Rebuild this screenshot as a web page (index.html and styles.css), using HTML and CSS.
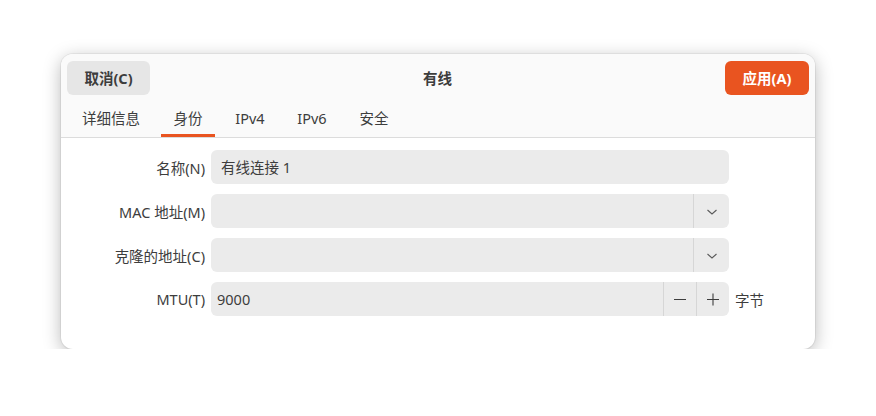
FILE: index.html
```html
<!DOCTYPE html>
<html lang="zh-CN">
<head>
<meta charset="utf-8">
<link rel="stylesheet" href="styles.css">
</head>
<body>
<div class="window">
  <div class="header">
    <div class="headerbar">
      <button class="btn btn-cancel">取消(C)</button>
      <div class="title">有线</div>
      <button class="btn btn-apply">应用(A)</button>
    </div>
    <div class="tabs">
      <div class="tab tab-wide">详细信息</div>
      <div class="tab tab-active">身份</div>
      <div class="tab">IPv4</div>
      <div class="tab">IPv6</div>
      <div class="tab">安全</div>
    </div>
  </div>
  <div class="content">
    <div class="label">名称(N)</div>
    <div class="entry"><span class="entry-text">有线连接 1</span></div>
    <div></div>

    <div class="label">MAC 地址(M)</div>
    <div class="entry combo"><span class="entry-text"></span><span class="combo-btn"><svg width="12" height="8" viewBox="0 0 12 8"><path d="M1.5 2 L6 6 L10.5 2" fill="none" stroke="#5a5a5a" stroke-width="1.1"/></svg></span></div>
    <div></div>

    <div class="label">克隆的地址(C)</div>
    <div class="entry combo"><span class="entry-text"></span><span class="combo-btn"><svg width="12" height="8" viewBox="0 0 12 8"><path d="M1.5 2 L6 6 L10.5 2" fill="none" stroke="#5a5a5a" stroke-width="1.1"/></svg></span></div>
    <div></div>

    <div class="label">MTU(T)</div>
    <div class="entry spin"><span class="entry-text spin-text">9000</span><span class="spin-btn"><svg width="14" height="14" viewBox="0 0 14 14"><path d="M1 7.5 H13" stroke="#3d3d3d" stroke-width="1.1"/></svg></span><span class="spin-btn"><svg width="14" height="14" viewBox="0 0 14 14"><path d="M1 7.5 H13 M7 1.5 V13.5" stroke="#3d3d3d" stroke-width="1.1"/></svg></span></div>
    <div class="unit">字节</div>
  </div>
</div>
</body>
</html>
```

FILE: styles.css
```css
* { box-sizing: border-box; }
html, body { margin: 0; padding: 0; background: #ffffff; }
body {
  font-family: "Noto Sans", "Noto Sans CJK SC", sans-serif;
  font-size: 14.5px;
  color: #3d3d3d;
  padding: 54px 0 0 61px;
}
.window {
  width: 754px;
  height: 295px;
  border-radius: 12px;
  background: #ffffff;
  overflow: hidden;
  box-shadow: 0 0 0 1px rgba(0,0,0,0.05), 0 4px 18px rgba(0,0,0,0.28);
}
.header {
  background: #fafafa;
  border-bottom: 1px solid #dcdcdc;
}
.headerbar {
  display: flex;
  align-items: flex-start;
  justify-content: space-between;
  padding: 7px 6px 0 6px;
  height: 47px;
}
.btn {
  font-family: inherit;
  font-size: 14.5px;
  font-weight: bold;
  height: 34px;
  border: none;
  border-radius: 6px;
  padding: 0 12px;
  line-height: 34px;
  white-space: nowrap;
}
.btn-cancel { background: #e6e6e6; color: #3d3d3d; width: 83px; }
.btn-apply { background: #e95420; color: #ffffff; width: 84px; }
.title {
  font-weight: bold;
  line-height: 34px;
  color: #3d3d3d;
}
.tabs {
  display: flex;
  gap: 8px;
  padding-left: 8px;
  height: 36px;
}
.tab {
  width: 54px;
  height: 36px;
  line-height: 35px;
  border-bottom: 3px solid transparent;
  color: #3d3d3d;
  white-space: nowrap;
  text-align: center;
}
.tab-wide { width: 84px; }
.tab-active { border-bottom-color: #e95420; }
.content {
  display: grid;
  grid-template-columns: 144px 518px auto;
  column-gap: 6px;
  row-gap: 10px;
  padding-top: 12px;
  align-items: center;
}
.label {
  text-align: right;
  color: #3d3d3d;
  white-space: nowrap;
}
.entry {
  height: 34px;
  background: #ebebeb;
  border-radius: 6px;
  display: flex;
  align-items: stretch;
  overflow: hidden;
}
.entry-text {
  flex: 1;
  line-height: 34px;
  padding-left: 10px;
}
.spin-text { padding-left: 6px; }
.combo-btn {
  width: 36px;
  border-left: 1px solid #d6d6d6;
  display: flex;
  align-items: center;
  justify-content: center;
  padding-top: 1px;
}
.spin-btn {
  width: 33px;
  border-left: 1px solid #d6d6d6;
  display: flex;
  align-items: center;
  justify-content: center;
}
.unit { color: #3d3d3d; white-space: nowrap; }
```
